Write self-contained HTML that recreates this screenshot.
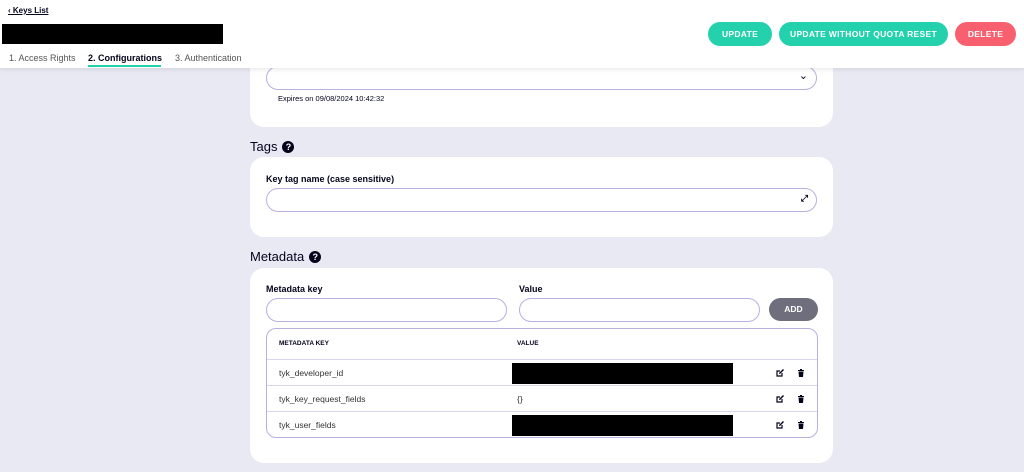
<!DOCTYPE html>
<html><head><style>
*{box-sizing:border-box;margin:0;padding:0}
body{width:1024px;height:472px;background:#e9e9f4;font-family:"Liberation Sans",sans-serif;position:relative;overflow:hidden;color:#03031c}
.abs{position:absolute}
.card{position:absolute;left:250px;width:583px;background:#fff;border-radius:14px}
.inp{position:absolute;border:1.5px solid #b5b2e0;border-radius:12px;background:#fff}
.lbl{position:absolute;font-size:9px;font-weight:bold;color:#03031c}
.h{position:absolute;left:250px;font-size:13px;color:#03031c}
.q{display:inline-block;width:12px;height:12px;border-radius:50%;background:#03031c;color:#fff;font-size:9px;font-weight:bold;text-align:center;line-height:12px;vertical-align:1px;margin-left:5px}
.btn{position:absolute;top:22px;height:24px;border-radius:12px;color:#fff;font-size:8.5px;font-weight:bold;text-align:center;line-height:24px;letter-spacing:.3px}
.row{position:absolute;left:0;width:100%;border-top:1px solid #d8d6ee;height:26px;font-size:8.5px;color:#333;line-height:26px}
.ic{position:absolute;top:9px;width:8px;height:8px}
</style></head><body>
<div class="abs" style="left:0;top:0;width:1024px;height:68px;background:#fff;box-shadow:0 2px 4px rgba(0,0,0,.08);z-index:2">
 <div class="abs" style="left:8px;top:6px;font-size:8px;font-weight:bold;text-decoration:underline">&lsaquo; Keys List</div>
 <div class="abs" style="left:2px;top:24px;width:221px;height:20px;background:#000"></div>
 <div class="abs" style="left:9px;top:53px;font-size:9px;color:#555">1. Access Rights</div>
 <div class="abs" style="left:88px;top:53px;font-size:9px;color:#03031c;font-weight:bold">2. Configurations</div>
 <div class="abs" style="left:88px;top:65px;width:73px;height:2px;background:#24d1ad"></div>
 <div class="abs" style="left:175px;top:53px;font-size:9px;color:#555">3. Authentication</div>
 <div class="btn" style="left:708px;width:64px;background:#24d1ad">UPDATE</div>
 <div class="btn" style="left:779px;width:169px;background:#24d1ad">UPDATE WITHOUT QUOTA RESET</div>
 <div class="btn" style="left:955px;width:61px;background:#f8606f">DELETE</div>
</div>
<div class="card" style="top:40px;height:87px">
 <div class="inp" style="left:16px;top:26px;width:551px;height:24px"><span class="abs" style="right:8px;top:2px;font-size:11px">&#8964;</span></div>
 <div class="abs" style="left:28px;top:54px;font-size:7.5px">Expires on 09/08/2024 10:42:32</div>
</div>
<div class="h" style="top:139px">Tags<span class="q">?</span></div>
<div class="card" style="top:157px;height:80px">
 <div class="lbl" style="left:16px;top:17px">Key tag name (case sensitive)</div>
 <div class="inp" style="left:16px;top:31px;width:551px;height:24px"><span class="abs" style="right:8px;top:4px;font-size:9px;font-weight:bold">&#10530;</span></div>
</div>
<div class="h" style="top:249px">Metadata<span class="q">?</span></div>
<div class="card" style="top:268px;height:195px">
 <div class="lbl" style="left:16px;top:16px">Metadata key</div>
 <div class="lbl" style="left:269px;top:16px">Value</div>
 <div class="inp" style="left:16px;top:30px;width:241px;height:24px"></div>
 <div class="inp" style="left:269px;top:30px;width:241px;height:24px"></div>
 <div class="abs" style="left:519px;top:30px;width:49px;height:23px;border-radius:12px;background:#6f6e7c;color:#fff;font-size:8.5px;font-weight:bold;text-align:center;line-height:23px">ADD</div>
 <div class="abs" style="left:16px;top:60px;width:552px;height:110px;border:1.5px solid #b5b2e0;border-radius:10px;overflow:hidden">
  <div class="abs" style="left:12px;top:11px;font-size:6.5px;font-weight:bold">METADATA KEY</div>
  <div class="abs" style="left:250px;top:11px;font-size:6.5px;font-weight:bold">VALUE</div>
  <div class="row" style="top:30px"><span style="margin-left:12px">tyk_developer_id</span><div class="abs" style="left:245px;top:3px;width:221px;height:21px;background:#000"></div><svg class="ic" style="left:509px" viewBox="0 0 8 8"><path d="M6 4v3H1V2h3" stroke="#03031c" fill="none" stroke-width="1.2"/><path d="M3 5l.3-1.3L7 0l1 1-3.7 3.7z" fill="#03031c"/></svg><svg class="ic" style="left:530px" viewBox="0 0 8 8"><path d="M1 1h6v1H1zM3 0h2v1H3zM1.5 2.5h5l-.5 5.5h-4z" fill="#03031c"/></svg></div>
  <div class="row" style="top:56px"><span style="margin-left:12px">tyk_key_request_fields</span><span class="abs" style="left:250px">{}</span><svg class="ic" style="left:509px" viewBox="0 0 8 8"><path d="M6 4v3H1V2h3" stroke="#03031c" fill="none" stroke-width="1.2"/><path d="M3 5l.3-1.3L7 0l1 1-3.7 3.7z" fill="#03031c"/></svg><svg class="ic" style="left:530px" viewBox="0 0 8 8"><path d="M1 1h6v1H1zM3 0h2v1H3zM1.5 2.5h5l-.5 5.5h-4z" fill="#03031c"/></svg></div>
  <div class="row" style="top:82px"><span style="margin-left:12px">tyk_user_fields</span><div class="abs" style="left:245px;top:3px;width:221px;height:21px;background:#000"></div><svg class="ic" style="left:509px" viewBox="0 0 8 8"><path d="M6 4v3H1V2h3" stroke="#03031c" fill="none" stroke-width="1.2"/><path d="M3 5l.3-1.3L7 0l1 1-3.7 3.7z" fill="#03031c"/></svg><svg class="ic" style="left:530px" viewBox="0 0 8 8"><path d="M1 1h6v1H1zM3 0h2v1H3zM1.5 2.5h5l-.5 5.5h-4z" fill="#03031c"/></svg></div>
 </div>
</div>
</body></html>
